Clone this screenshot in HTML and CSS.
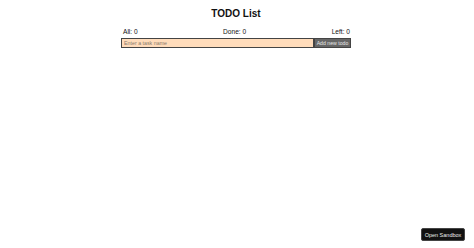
FILE: index.html
```html
<!DOCTYPE html>
<html>
<head>
<meta charset="utf-8">
<link rel="stylesheet" href="styles.css">
</head>
<body>
<div class="app">
  <h1 class="title">TODO List</h1>
  <div class="stats">
    <span>All: 0</span>
    <span>Done: 0</span>
    <span>Left: 0</span>
  </div>
  <form class="add-form">
    <input class="task-input" type="text" placeholder="Enter a task name">
    <button class="add-btn" type="button">Add new todo</button>
  </form>
</div>
<button class="sandbox-btn" type="button">Open Sandbox</button>
</body>
</html>
```
FILE: styles.css
```css
html, body {
  margin: 0;
  padding: 0;
  background: #fff;
  font-family: "Liberation Sans", Arial, sans-serif;
  color: #111;
}
.app {
  width: 230px;
  margin: 0 auto;
  padding-top: 8px;
  position: relative;
  left: -1px;
}
.title {
  margin: 0;
  text-align: center;
  font-size: 10px;
  font-weight: bold;
  line-height: 12px;
}
.stats {
  display: flex;
  justify-content: space-between;
  font-size: 6.6px;
  line-height: 8px;
  margin-top: 8px;
  padding: 0 1px 0 2px;
}
.add-form {
  display: flex;
  margin-top: 2px;
  height: 10px;
}
.task-input {
  flex: 1;
  min-width: 0;
  margin: 0;
  padding: 0 2px;
  height: 10px;
  box-sizing: border-box;
  border: 1px solid #444;
  background: #ffdcbb;
  font-family: "Liberation Sans", Arial, sans-serif;
  font-size: 5.3px;
  outline: none;
}
.task-input::placeholder {
  color: #8a7a6a;
}
.add-btn {
  margin: 0;
  padding: 0 1px;
  height: 10px;
  width: 37px;
  box-sizing: border-box;
  border: 1px solid #444;
  background: #666;
  color: #e6e6e6;
  font-family: "Liberation Sans", Arial, sans-serif;
  font-size: 5.2px;
  white-space: nowrap;
}
.sandbox-btn {
  position: fixed;
  right: 9px;
  bottom: 7px;
  width: 44px;
  height: 13px;
  padding: 0;
  border: 1px solid #444;
  border-radius: 2px;
  background: #111;
  color: #eee;
  font-family: "Liberation Sans", Arial, sans-serif;
  font-size: 5.5px;
}
```
